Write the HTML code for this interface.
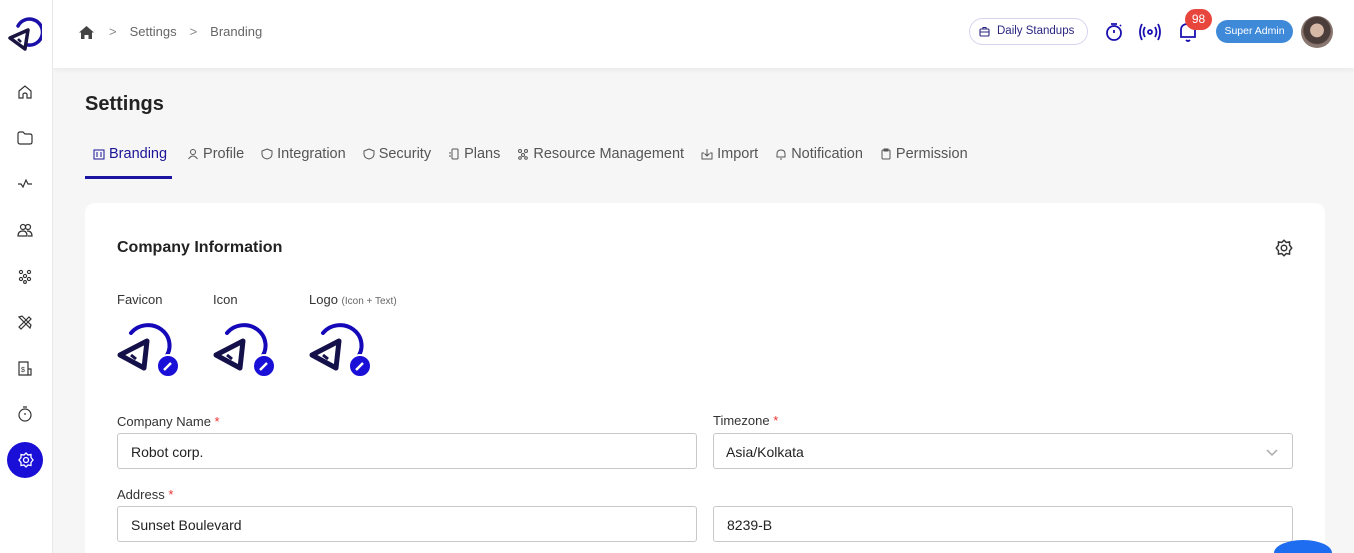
<!DOCTYPE html>
<html style="width:1354px;height:553px;overflow:hidden"><head><meta charset="utf-8"><style>
*{box-sizing:border-box;margin:0;padding:0}
body{width:1354px;height:553px;overflow:hidden;background:#f7f6f7;font-family:"Liberation Sans",sans-serif;position:relative;color:#222}
.wrap{position:absolute;left:0;top:0;width:1354px;height:553px;overflow:hidden}
.side{position:absolute;left:0;top:0;width:53px;height:553px;background:#fff;border-right:1px solid #e8e8e8;z-index:3}
.top{position:absolute;left:53px;top:0;right:0;height:68px;background:#fff;box-shadow:0 2px 6px rgba(0,0,0,.06);z-index:2}
.si{position:absolute;left:16px;width:18px;height:18px}
.crumb{position:absolute;top:24px;left:26px;font-size:13px;color:#666;display:flex;align-items:center;gap:0}
.abs{position:absolute}
.tabs{position:absolute;top:137px;left:85px;display:flex;font-size:14.5px;color:#555}
.tab{display:flex;align-items:center;gap:4px;padding:0 9px 0 8px;height:34px;position:relative}
.tab svg{width:12px;height:12px}
.card{position:absolute;left:85px;top:203px;width:1240px;height:350px;background:#fff;border-radius:10px 10px 0 0}
.lbl{position:absolute;font-size:13px;color:#333}
.lbl b{color:#e33;font-weight:normal}
.inp{position:absolute;height:36px;border:1px solid #c8c8c8;border-radius:3px;font-size:14px;color:#222;padding:10px 13px;background:#fff}
</style></head><body><div class="wrap">
<div class="side">
<svg class="abs" style="left:6px;top:12px" width="36" height="40" viewBox="0 0 36 40"><path d="M12 14 A13 13 0 1 1 22 33" fill="none" stroke="#1a0fa8" stroke-width="3.5" stroke-linecap="round"/><path d="M4 26 L22 18 L19 37 Z" fill="none" stroke="#1a1440" stroke-width="3.5" stroke-linejoin="round"/><path d="M12 27 L15 30" stroke="#1a1440" stroke-width="2.5"/></svg>
<svg class="si" style="top:83px" viewBox="0 0 18 18" fill="none" stroke="#333" stroke-width="1.2"><path d="M3 8 L9 3 L15 8 V15 H11 V11 Q9 9 7 11 V15 H3Z"/></svg>
<svg class="si" style="top:129px" viewBox="0 0 18 18" fill="none" stroke="#333" stroke-width="1.2"><path d="M2 5 Q2 3 4 3 H7 L9 5 H14 Q16 5 16 7 V13 Q16 15 14 15 H4 Q2 15 2 13Z"/></svg>
<svg class="si" style="top:175px" viewBox="0 0 18 18" fill="none" stroke="#333" stroke-width="1.2"><path d="M2 9 H5 L7 12 L10 5 L12 9 H16"/></svg>
<svg class="si" style="top:221px" viewBox="0 0 18 18" fill="none" stroke="#333" stroke-width="1.2"><circle cx="7" cy="6" r="2.5"/><circle cx="12" cy="6" r="2.5"/><path d="M2 15 Q2 10 7 10 Q11 10 11 15Z M11 10 Q16 10 16 15 H12"/></svg>
<svg class="si" style="top:267px" viewBox="0 0 18 18" fill="none" stroke="#333" stroke-width="1.1"><circle cx="5" cy="5" r="1.6"/><circle cx="13" cy="5" r="1.6"/><circle cx="9" cy="9" r="1.6"/><circle cx="5" cy="12" r="1.6"/><circle cx="13" cy="12" r="1.6"/><circle cx="9" cy="15" r="1.4"/></svg>
<svg class="si" style="top:313px" viewBox="0 0 18 18" fill="none" stroke="#333" stroke-width="1.2"><path d="M3 14 L13 4 L15 6 L5 16Z M3 4 L6 3 L15 12 L14 15Z"/></svg>
<svg class="si" style="top:359px" viewBox="0 0 18 18" fill="none" stroke="#333" stroke-width="1.2"><path d="M3 3 H12 V16 H3Z M12 10 H15 V16 H12"/><text x="5" y="13" font-size="7" fill="#333" stroke="none">$</text></svg>
<svg class="si" style="top:405px" viewBox="0 0 18 18" fill="none" stroke="#333" stroke-width="1.2"><circle cx="9" cy="10" r="6"/><path d="M7 2 H11 M9 8 V10"/></svg>
<div class="abs" style="left:7px;top:442px;width:36px;height:36px;border-radius:50%;background:#1a0fd6"></div>
<svg class="si" style="top:451px;left:17px" viewBox="0 0 18 18" fill="none" stroke="#fff" stroke-width="1.3"><circle cx="9" cy="9" r="2.5"/><path d="M9 2 L11 4 L14 3.5 L14 6.5 L16 9 L14 11.5 L14 14.5 L11 14 L9 16 L7 14 L4 14.5 L4 11.5 L2 9 L4 6.5 L4 3.5 L7 4Z"/></svg>
</div>
<div class="top">
<div class="crumb"><svg width="15" height="14" viewBox="0 0 15 14"><path d="M7.5 1 L15 7.5 H13 V14 H9.5 V10 H5.5 V14 H2 V7.5 H0Z" fill="#444"/></svg>
<span style="margin:0 13px 0 15px;color:#888">&gt;</span>Settings<span style="margin:0 13px;color:#888">&gt;</span>Branding</div>
<div class="abs" style="left:916px;top:18px;width:119px;height:27px;border:1px solid #d6d4ee;border-radius:14px;font-size:11.5px;color:#2a2680;padding:6px 0 0 27px">Daily Standups
<svg class="abs" style="left:9px;top:7px" width="11" height="11" viewBox="0 0 11 11" fill="none" stroke="#2a2680" stroke-width="1.1"><rect x="1" y="3" width="9" height="7" rx="1"/><path d="M4 3 V1.5 H7 V3 M1 6 H10"/></svg></div>
<svg class="abs" style="left:1051px;top:21px" width="20" height="22" viewBox="0 0 20 22" fill="none" stroke="#1a10b0" stroke-width="1.8"><circle cx="10" cy="12" r="7"/><path d="M7 3 H13 M10 9 V12 M16 5 L17 4"/></svg>
<svg class="abs" style="left:1086px;top:22px" width="22" height="20" viewBox="0 0 22 20" fill="none" stroke="#1a10b0" stroke-width="1.8"><circle cx="11" cy="10" r="2"/><path d="M6 5 Q3 10 6 15 M16 5 Q19 10 16 15 M3 2 Q-1 10 3 18 M19 2 Q23 10 19 18"/></svg>
<svg class="abs" style="left:1124px;top:20px" width="22" height="24" viewBox="0 0 22 24" fill="none" stroke="#1a10b0" stroke-width="1.8"><path d="M4 17 V10 Q4 4 11 4 Q18 4 18 10 V17 Z M9 20 Q11 22 13 20"/></svg>
<div class="abs" style="left:1132px;top:9px;width:27px;height:21px;border-radius:11px;background:#e8453c;color:#fff;font-size:12px;text-align:center;line-height:21px">98</div>
<div class="abs" style="left:1163px;top:20px;width:77px;height:23px;border-radius:12px;background:#3f8ad8;color:#fff;font-size:10.5px;text-align:center;line-height:23px">Super Admin</div>
<div class="abs" style="left:1248px;top:16px;width:32px;height:32px;border-radius:50%;background:radial-gradient(circle at 50% 45%,#d6b8a6 0 28%,#4a3d3a 30% 55%,#8a7670 60%)"></div>
</div>
<div class="abs" style="left:85px;top:93px;font-size:20px;font-weight:bold;color:#222">Settings</div>
<div class="tabs">
<div class="tab" style="color:#1a1496"><svg viewBox="0 0 12 12" fill="none" stroke="#1a1496"><rect x="1" y="2" width="10" height="9"/><path d="M4 4 V9 M8 4 V9"/></svg>Branding<div class="abs" style="left:0;right:4px;bottom:-8px;height:3px;background:#1a14a0"></div></div>
<div class="tab" style="margin-left:3px"><svg viewBox="0 0 12 12" fill="none" stroke="#555"><circle cx="6" cy="4" r="2.5"/><path d="M1.5 11 Q6 5 10.5 11"/></svg>Profile</div>
<div class="tab"><svg viewBox="0 0 12 12" fill="none" stroke="#555"><path d="M6 1 L11 3 V6 Q11 10 6 11 Q1 10 1 6 V3Z"/></svg>Integration</div>
<div class="tab"><svg viewBox="0 0 12 12" fill="none" stroke="#555"><path d="M6 1 L11 3 V6 Q11 10 6 11 Q1 10 1 6 V3Z"/></svg>Security</div>
<div class="tab"><svg viewBox="0 0 12 12" fill="none" stroke="#555"><rect x="4" y="1" width="6" height="10" rx="1"/><path d="M1 5 H3 M1 8 H3"/></svg>Plans</div>
<div class="tab"><svg viewBox="0 0 12 12" fill="none" stroke="#555"><circle cx="3" cy="3" r="1.5"/><circle cx="9" cy="3" r="1.5"/><circle cx="6" cy="7" r="1.5"/><circle cx="3" cy="10" r="1.3"/><circle cx="9" cy="10" r="1.3"/></svg>Resource Management</div>
<div class="tab"><svg viewBox="0 0 12 12" fill="none" stroke="#555"><path d="M3 5 H1 V11 H11 V5 H9 M6 1 V8 M3.5 5.5 L6 8 L8.5 5.5"/></svg>Import</div>
<div class="tab"><svg viewBox="0 0 12 12" fill="none" stroke="#555"><path d="M2 9 V6 Q2 2 6 2 Q10 2 10 6 V9Z M5 11 H7"/></svg>Notification</div>
<div class="tab"><svg viewBox="0 0 12 12" fill="none" stroke="#555"><rect x="2" y="2" width="8" height="9" rx="1"/><path d="M4 1 H8 V3 H4Z"/></svg>Permission</div>
</div>
<div class="card">
<div class="abs" style="left:32px;top:36px;font-size:16px;font-weight:bold;color:#222">Company Information</div>
<svg class="abs" style="left:1189px;top:35px" width="20" height="20" viewBox="0 0 18 18" fill="none" stroke="#333" stroke-width="1.3"><circle cx="9" cy="9" r="2.5"/><path d="M9 2 L11 4 L14 3.5 L14 6.5 L16 9 L14 11.5 L14 14.5 L11 14 L9 16 L7 14 L4 14.5 L4 11.5 L2 9 L4 6.5 L4 3.5 L7 4Z"/></svg>
<div class="lbl" style="left:32px;top:89px">Favicon</div>
<div class="lbl" style="left:128px;top:89px">Icon</div>
<div class="lbl" style="left:224px;top:89px">Logo <span style="font-size:10px;color:#666">(Icon + Text)</span></div>
<svg class="abs" style="left:30px;top:110px" width="70" height="70" viewBox="0 0 70 70"><path d="M16 20 A18 17 0 1 1 50 45" fill="none" stroke="#1408b8" stroke-width="4" stroke-linecap="round"/><path d="M5 42 L32 28 L29 55 Z" fill="none" stroke="#14104a" stroke-width="5" stroke-linejoin="round"/><path d="M16 42 L21 46" stroke="#14104a" stroke-width="3"/><circle cx="53" cy="53" r="11" fill="#1a0fd6" stroke="#fff" stroke-width="2"/><path d="M49 57 L56 50" stroke="#fff" stroke-width="2.5"/></svg>
<svg class="abs" style="left:126px;top:110px" width="70" height="70" viewBox="0 0 70 70"><path d="M16 20 A18 17 0 1 1 50 45" fill="none" stroke="#1408b8" stroke-width="4" stroke-linecap="round"/><path d="M5 42 L32 28 L29 55 Z" fill="none" stroke="#14104a" stroke-width="5" stroke-linejoin="round"/><path d="M16 42 L21 46" stroke="#14104a" stroke-width="3"/><circle cx="53" cy="53" r="11" fill="#1a0fd6" stroke="#fff" stroke-width="2"/><path d="M49 57 L56 50" stroke="#fff" stroke-width="2.5"/></svg>
<svg class="abs" style="left:222px;top:110px" width="70" height="70" viewBox="0 0 70 70"><path d="M16 20 A18 17 0 1 1 50 45" fill="none" stroke="#1408b8" stroke-width="4" stroke-linecap="round"/><path d="M5 42 L32 28 L29 55 Z" fill="none" stroke="#14104a" stroke-width="5" stroke-linejoin="round"/><path d="M16 42 L21 46" stroke="#14104a" stroke-width="3"/><circle cx="53" cy="53" r="11" fill="#1a0fd6" stroke="#fff" stroke-width="2"/><path d="M49 57 L56 50" stroke="#fff" stroke-width="2.5"/></svg>
<div class="lbl" style="left:32px;top:211px">Company Name <b>*</b></div>
<div class="lbl" style="left:628px;top:210px">Timezone <b>*</b></div>
<div class="inp" style="left:32px;top:230px;width:580px">Robot corp.</div>
<div class="inp" style="left:628px;top:230px;width:580px;padding-left:12px">Asia/Kolkata
<svg class="abs" style="left:551px;top:14px" width="14" height="9" viewBox="0 0 14 9" fill="none" stroke="#aaa" stroke-width="1.5"><path d="M2 2 L7 7 L12 2"/></svg></div>
<div class="lbl" style="left:32px;top:284px">Address <b>*</b></div>
<div class="inp" style="left:32px;top:303px;width:580px">Sunset Boulevard</div>
<div class="inp" style="left:628px;top:303px;width:580px;padding-left:13px">8239-B</div>
</div>
<div class="abs" style="left:1274px;top:540px;width:58px;height:13px;border-radius:29px 29px 0 0/13px 13px 0 0;background:#1e6cf0"></div>
</div></body></html>
